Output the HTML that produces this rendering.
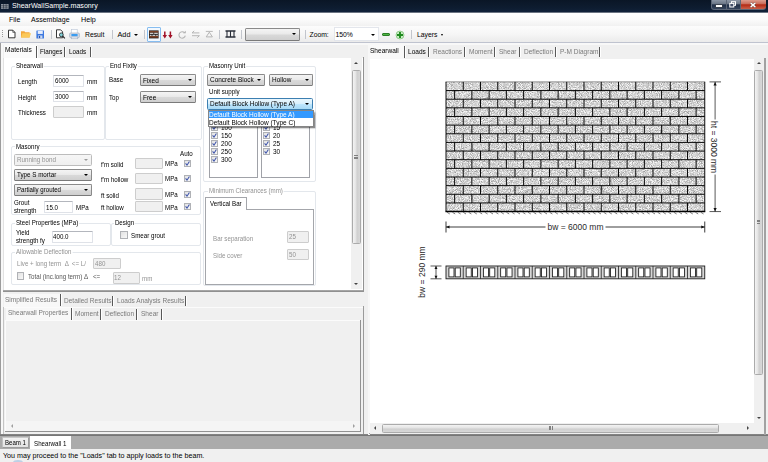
<!DOCTYPE html><html><head><meta charset="utf-8"><title>ShearWallSample.masonry</title><style>
html,body{margin:0;padding:0}
body{width:768px;height:462px;overflow:hidden;background:#f0f0f0;position:relative;font-family:"Liberation Sans",sans-serif;font-size:6.2px;color:#000;line-height:1}
.a{position:absolute}
.t{position:absolute;white-space:nowrap;line-height:8px;height:8px}
.g{color:#929292}
.gb{position:absolute;border:1px solid #e3e7ec;border-radius:2px;box-sizing:border-box}
.gl{position:absolute;background:#fff;padding:0 1px;white-space:nowrap;line-height:8px;height:8px}
.in{position:absolute;box-sizing:border-box;border:1px solid #dfe2e8;border-top-color:#b3b6bd;background:#fff;border-radius:1px}
.in.d{background:#f0f0f0;border-color:#cdcdcd}
.cb{position:absolute;box-sizing:border-box;border:1px solid #8a8a8a;border-bottom-color:#7a7a7a;border-radius:1.5px;background:linear-gradient(#f4f4f4,#e9e9e9 48%,#d9d9d9 52%,#cfcfcf)}
.cb.d{border-color:#bcbcbc;background:linear-gradient(#f6f6f6,#efefef)}
.cb.f{border-color:#3c7fb1;background:linear-gradient(#eaf6fd,#d9f0fc 48%,#bee6fd 52%,#a7d9f5)}
.ar{position:absolute;width:0;height:0;border-left:2px solid transparent;border-right:2px solid transparent;border-top:2.5px solid #000}
.ar.d{border-top-color:#9a9a9a}
.ck{position:absolute;box-sizing:border-box;width:7px;height:7px;border:1px solid #b0b2b6;background:linear-gradient(135deg,#e2e2e2,#f8f8f8)}
.sep{position:absolute;width:1px;background:#585858}
.tsep{position:absolute;width:1px;background:#c2c5cc}
</style></head><body>
<div class="a" style="left:0px;top:0px;width:768px;height:11.8px;background:linear-gradient(#0a1626,#0e1d31 70%,#11223a)"></div>
<div class="a" style="left:0px;top:11.8px;width:768px;height:0.8px;background:#6b7482"></div>
<svg class="a" style="left:.5px;top:3.6px" width="8" height="5" viewBox="0 0 8 5"><rect x="0" y=".2" width="7.6" height="4.5" fill="#aab0b8"/><path d="M0 1.7H7.6M0 3.2H7.6M2.5 .2V4.7M5.1 .2V4.7" stroke="#2c3644" stroke-width=".7"/></svg>
<div class="t " style="left:12px;top:2.4000000000000004px;color:#fff;font-size:7.1px">ShearWallSample.masonry</div>
<div class="a" style="left:711px;top:0;width:55px;height:9.5px;border:1px solid #5c6676;border-top:none;border-radius:0 0 3px 3px;box-sizing:border-box;background:linear-gradient(#8c96a5,#6a7585 46%,#1f2e46 52%,#34435b)"></div>
<div class="a" style="left:740.5px;top:0px;width:25px;height:9px;background:linear-gradient(#dd9d8e,#c96956 46%,#b32812 52%,#c9604a);border-radius:0 0 3px 0"></div>
<div class="a" style="left:725.5px;top:0px;width:1px;height:9px;background:#5c6676"></div>
<div class="a" style="left:740px;top:0px;width:1px;height:9px;background:#5c6676"></div>
<div class="a" style="left:715.5px;top:5px;width:6px;height:2px;background:#fff;box-shadow:0 0 0 .5px #444"></div>
<svg class="a" style="left:728px;top:1px" width="10" height="7" viewBox="0 0 10 7"><rect x="3.5" y=".7" width="4" height="3.6" fill="none" stroke="#fff" stroke-width="1"/><rect x="1.8" y="2.4" width="4" height="3.6" fill="#44506a" stroke="#fff" stroke-width="1"/></svg>
<svg class="a" style="left:749px;top:1.5px" width="8" height="6" viewBox="0 0 8 6"><path d="M1.6 .9 L6.4 5.1 M6.4 .9 L1.6 5.1" stroke="#5a2a22" stroke-width="2.2"/><path d="M1.6 .9 L6.4 5.1 M6.4 .9 L1.6 5.1" stroke="#fff" stroke-width="1.4"/></svg>
<div class="a" style="left:0px;top:12.5px;width:768px;height:13.5px;background:linear-gradient(#ffffff,#fbfbfb 50%,#f1f1f1)"></div>
<div class="t " style="left:9px;top:15.8px;font-size:7px">File</div>
<div class="t " style="left:31px;top:15.8px;font-size:7px">Assemblage</div>
<div class="t " style="left:81px;top:15.8px;font-size:7.2px">Help</div>
<div class="a" style="left:0px;top:26px;width:768px;height:16px;background:linear-gradient(#fcfcfc,#f6f6f6 50%,#ebebeb)"></div>
<div class="a" style="left:0px;top:42px;width:768px;height:1px;background:#bfc3cf"></div>
<div class="a" style="left:0px;top:43px;width:768px;height:2px;background:#f8f8f8"></div>
<div class="a" style="left:2.2px;top:29.5px;width:1px;height:1px;background:#9a9a9a"></div>
<div class="a" style="left:2.2px;top:31.8px;width:1px;height:1px;background:#9a9a9a"></div>
<div class="a" style="left:2.2px;top:34.1px;width:1px;height:1px;background:#9a9a9a"></div>
<div class="a" style="left:2.2px;top:36.4px;width:1px;height:1px;background:#9a9a9a"></div>
<svg class="a" style="left:7px;top:29px" width="10" height="10" viewBox="0 0 10 10"><path d="M1.5 1.2H5.8L8 3.4V8.8H1.5Z" fill="#fff" stroke="#222" stroke-width=".9"/><path d="M5.8 1.2V3.4H8" fill="none" stroke="#222" stroke-width=".6"/></svg>
<svg class="a" style="left:20px;top:29px" width="12" height="10" viewBox="0 0 12 10"><path d="M1 2.2H4.4L5.2 3.2H9.6V8.4H1Z" fill="#f2a73c"/><path d="M2.4 4.2H11L9.6 8.6H1Z" fill="#fbc95a"/></svg>
<svg class="a" style="left:35.8px;top:29.8px" width="8.5" height="9.4" viewBox="0 0 9 10"><rect x=".4" y=".4" width="8.2" height="8.6" rx=".6" fill="#3d79e0"/><rect x="1.8" y=".8" width="5.4" height="3.4" fill="#e6eefc"/><rect x="2.2" y="5.8" width="4.6" height="3.2" fill="#c9d6ee"/><rect x="3" y="6.4" width="1.4" height="2.2" fill="#2b55aa"/></svg>
<div class="a" style="left:50.5px;top:30px;width:1px;height:9px;background:#c2c5cc"></div>
<svg class="a" style="left:55px;top:29px" width="11" height="10" viewBox="0 0 11 10"><path d="M1.5 .8H5.6L7.6 2.8V8.8H1.5Z" fill="#fff" stroke="#222" stroke-width=".9"/><circle cx="6.3" cy="5.8" r="1.9" fill="#7fd0d8" stroke="#222" stroke-width=".8"/><path d="M7.7 7.2L9.8 9.4" stroke="#222" stroke-width="1.2"/></svg>
<svg class="a" style="left:69px;top:29px" width="11" height="11" viewBox="0 0 11 11"><rect x="2.6" y=".6" width="5.6" height="4" fill="#fff" stroke="#b8c4d6" stroke-width=".6"/><rect x=".6" y="4" width="9.8" height="4.6" rx="1" fill="#d5dbe6" stroke="#9aa6ba" stroke-width=".6"/><rect x="2.4" y="5" width="6.2" height="2.2" fill="#3b9cf0"/><rect x="2.2" y="8" width="6.6" height="1.8" fill="#eef1f6" stroke="#9aa6ba" stroke-width=".5"/></svg>
<div class="t " style="left:85px;top:30.700000000000003px;font-size:6.8px">Result</div>
<div class="a" style="left:111.5px;top:30px;width:1px;height:9px;background:#c2c5cc"></div>
<div class="t " style="left:117.5px;top:30.700000000000003px;font-size:7.3px">Add</div>
<div class="ar" style="left:133.8px;top:33.8px;border-left-width:2px;border-right-width:2px;border-top-width:2.3px"></div>
<div class="a" style="left:143.5px;top:30px;width:1px;height:9px;background:#c2c5cc"></div>
<div class="a" style="left:147px;top:27px;width:14px;height:14.5px;border:1px solid #86bdf0;background:#f2f8fe;box-sizing:border-box;border-radius:1px"></div>
<svg class="a" style="left:149px;top:29.5px" width="10" height="9" viewBox="0 0 10 9"><rect x="0" y=".4" width="9.6" height="8" fill="#1f1d1c"/><path d="M.3 1.9H9.3M.3 6.9H9.3" stroke="#d9652f" stroke-width=".8"/><path d="M.8 3.3H4.4M5.2 3.3H8.8M.8 5.4H2.6M3.4 5.4H6.4M7.2 5.4H8.8" stroke="#c9c9c9" stroke-width="1.2"/></svg>
<svg class="a" style="left:162px;top:30.5px" width="12" height="8" viewBox="0 0 12 8"><path d="M2.8 .6V5M8.4 .6V5" stroke="#a01228" stroke-width="1.5"/><path d="M.6 4H5L2.8 7.4ZM6.2 4H10.6L8.4 7.4Z" fill="#a01228"/></svg>
<svg class="a" style="left:176.5px;top:29.5px" width="11" height="10" viewBox="0 0 11 10"><path d="M7.6 2.9A3.2 3.2 0 1 0 8.3 5.6" fill="none" stroke="#b2b2b2" stroke-width="1.05"/><path d="M5.9 3.3H8.8V.7Z" fill="#b2b2b2"/></svg>
<svg class="a" style="left:190.5px;top:30px" width="10" height="9" viewBox="0 0 10 9"><path d="M1 2.9H8.4M3.2 .9L1 2.9M1 5.7H8.4M6.2 7.7L8.4 5.7" fill="none" stroke="#b2b2b2" stroke-width=".95"/></svg>
<svg class="a" style="left:204.5px;top:30px" width="9" height="9" viewBox="0 0 9 9"><path d="M.8 1.4H7.8M4.3 2.2L1.2 6.9H7.4Z" fill="none" stroke="#b2b2b2" stroke-width=".95"/></svg>
<div class="a" style="left:219px;top:30px;width:1px;height:9px;background:#c2c5cc"></div>
<svg class="a" style="left:224.5px;top:30px" width="11" height="8" viewBox="0 0 11 8"><path d="M.5 1H10.5M.5 7H10.5" stroke="#2a2f3a" stroke-width="1.3"/><path d="M2 1V7M5.5 1V7M9 1V7" stroke="#2a2f3a" stroke-width="1.1"/></svg>
<div class="a" style="left:240.5px;top:30px;width:1px;height:9px;background:#c2c5cc"></div>
<div class="cb " style="left:245px;top:27.5px;width:54.5px;height:13.5px"></div>
<div class="ar " style="left:291.5px;top:33.25px"></div>
<div class="a" style="left:304.5px;top:30px;width:1px;height:9px;background:#c2c5cc"></div>
<div class="t " style="left:309.5px;top:30.700000000000003px;font-size:6.8px">Zoom:</div>
<div class="a" style="left:333.5px;top:27px;width:45px;height:13.5px;background:#fff;border:1px solid #e3e6ec;box-sizing:border-box"></div>
<div class="t " style="left:335.5px;top:30.700000000000003px;font-size:6.8px">150%</div>
<div class="ar" style="left:371px;top:33.5px"></div>
<div class="a" style="left:382px;top:32.5px;width:8px;height:3.6px;background:linear-gradient(#6fcf61,#2e9a28);border:0.6px solid #2a7d25;box-sizing:border-box;border-radius:1px"></div>
<svg class="a" style="left:395px;top:29.5px" width="10" height="10" viewBox="0 0 10 10"><circle cx="5" cy="5" r="4" fill="#c9ecc3" stroke="#6ab564" stroke-width=".6"/><path d="M5 2V8M2 5H8" stroke="#1f8a1f" stroke-width="1.9"/></svg>
<div class="a" style="left:410.5px;top:30px;width:1px;height:9px;background:#c2c5cc"></div>
<div class="t " style="left:417px;top:30.700000000000003px;font-size:6.8px">Layers</div>
<div class="ar" style="left:440.6px;top:34px;border-left-width:1.8px;border-right-width:1.8px;border-top-width:2.1px"></div>
<div class="a" style="left:0px;top:42.5px;width:0.9px;height:392px;background:#9c9c9c"></div>
<div class="a" style="left:0.9px;top:42.5px;width:1.8px;height:392px;background:#f8f8f8"></div>
<div class="a" style="left:3.2px;top:58px;width:1px;height:232px;background:#e2e2e2"></div>
<div class="a" style="left:4px;top:58.3px;width:359px;height:232px;background:#fff"></div>
<div class="a" style="left:2.7px;top:289.9px;width:361.3px;height:1.7px;background:linear-gradient(#b0b0b0,#858585)"></div>
<div class="a" style="left:362.5px;top:57px;width:1.5px;height:234.5px;background:#929292"></div>
<div class="a" style="left:3.5px;top:44.5px;width:33px;height:13.5px;background:#fbfbfb"></div>
<div class="t " style="left:5px;top:46.3px;;font-size:7.33px;transform:scaleX(.9);transform-origin:0 50%">Materials</div>
<div class="a" style="left:36.3px;top:45.5px;width:1.1px;height:12px;background:#585858"></div>
<div class="a" style="left:37.4px;top:45.5px;width:0.7px;height:12px;background:#fff"></div>
<div class="t " style="left:40px;top:47.5px;;font-size:6.99px;transform:scaleX(.9);transform-origin:0 50%">Flanges</div>
<div class="a" style="left:64.3px;top:46.5px;width:1.1px;height:10.5px;background:#585858"></div>
<div class="a" style="left:65.4px;top:46.5px;width:0.7px;height:10.5px;background:#fff"></div>
<div class="t " style="left:69px;top:47.5px;;font-size:6.99px;transform:scaleX(.9);transform-origin:0 50%">Loads</div>
<div class="a" style="left:89.8px;top:46.5px;width:1.1px;height:10.5px;background:#585858"></div>
<div class="a" style="left:90.9px;top:46.5px;width:0.7px;height:10.5px;background:#fff"></div>
<div class="gb" style="left:11px;top:65.7px;width:94px;height:74.5px"></div>
<div class="gl " style="left:15px;top:62.2px;font-size:6.85px;transform:scaleX(.9);transform-origin:0 50%">Shearwall</div>
<div class="t " style="left:18px;top:77.5px;;font-size:6.88px;transform:scaleX(.9);transform-origin:0 50%">Length</div>
<div class="in " style="left:53px;top:75px;width:30.5px;height:11.5px"></div>
<div class="t " style="left:54.8px;top:77.25px;;font-size:6.88px;transform:scaleX(.9);transform-origin:0 50%">6000</div>
<div class="t " style="left:87px;top:77.5px;;font-size:6.88px;transform:scaleX(.9);transform-origin:0 50%">mm</div>
<div class="t " style="left:18px;top:93.5px;;font-size:6.88px;transform:scaleX(.9);transform-origin:0 50%">Height</div>
<div class="in " style="left:53px;top:90.5px;width:30.5px;height:11.5px"></div>
<div class="t " style="left:54.8px;top:92.75px;;font-size:6.88px;transform:scaleX(.9);transform-origin:0 50%">3000</div>
<div class="t " style="left:87px;top:93.5px;;font-size:6.88px;transform:scaleX(.9);transform-origin:0 50%">mm</div>
<div class="t " style="left:18px;top:108.5px;;font-size:6.88px;transform:scaleX(.9);transform-origin:0 50%">Thickness</div>
<div class="in d" style="left:53px;top:106px;width:30.5px;height:11.5px"></div>
<div class="t " style="left:87px;top:108.5px;;font-size:6.88px;transform:scaleX(.9);transform-origin:0 50%">mm</div>
<div class="gb" style="left:104.5px;top:65.7px;width:97px;height:74.5px"></div>
<div class="gl " style="left:109px;top:62.2px;font-size:6.85px;transform:scaleX(.9);transform-origin:0 50%">End Fixity</div>
<div class="t " style="left:109px;top:75.8px;;font-size:6.88px;transform:scaleX(.9);transform-origin:0 50%">Base</div>
<div class="cb " style="left:140px;top:74px;width:55.5px;height:12px"></div>
<div class="t " style="left:142.5px;top:76.5px;;font-size:7.16px;transform:scaleX(.9);transform-origin:0 50%">Fixed</div>
<div class="ar " style="left:187.5px;top:79.0px"></div>
<div class="t " style="left:109px;top:93.5px;;font-size:6.88px;transform:scaleX(.9);transform-origin:0 50%">Top</div>
<div class="cb " style="left:140px;top:91px;width:55.5px;height:12px"></div>
<div class="t " style="left:142.5px;top:93.5px;;font-size:7.16px;transform:scaleX(.9);transform-origin:0 50%">Free</div>
<div class="ar " style="left:187.5px;top:96.0px"></div>
<div class="gb" style="left:203px;top:65.7px;width:112.5px;height:116px"></div>
<div class="gl " style="left:208px;top:62.2px;font-size:6.85px;transform:scaleX(.9);transform-origin:0 50%">Masonry Unit</div>
<div class="cb " style="left:207px;top:73.5px;width:58px;height:12px"></div>
<div class="t " style="left:209.5px;top:76.0px;;font-size:7.16px;transform:scaleX(.9);transform-origin:0 50%">Concrete Block</div>
<div class="ar " style="left:257px;top:78.5px"></div>
<div class="cb " style="left:269px;top:73.5px;width:44px;height:12px"></div>
<div class="t " style="left:271.5px;top:76.0px;;font-size:7.16px;transform:scaleX(.9);transform-origin:0 50%">Hollow</div>
<div class="ar " style="left:305px;top:78.5px"></div>
<div class="t " style="left:209px;top:87.7px;;font-size:6.88px;transform:scaleX(.9);transform-origin:0 50%">Unit supply</div>
<div class="cb f" style="left:207px;top:97.5px;width:106px;height:12px"></div>
<div class="t " style="left:209.5px;top:100.0px;;font-size:7.16px;transform:scaleX(.9);transform-origin:0 50%">Default Block Hollow (Type A)</div>
<div class="ar " style="left:305px;top:102.5px"></div>
<div class="a" style="left:209px;top:120px;width:48.5px;height:57.5px;border:1px solid #a0a2a8;background:#fff;box-sizing:border-box"></div>
<div class="a" style="left:261px;top:120px;width:48.5px;height:57.5px;border:1px solid #a0a2a8;background:#fff;box-sizing:border-box"></div>
<div class="ck" style="left:211px;top:123.5px;width:7px;height:7px"></div>
<svg class="a" style="left:211px;top:123.5px" width="7" height="7" viewBox="0 0 7 7"><path d="M1.6 3.4 L3 5.2 L5.4 1.5" fill="none" stroke="#3a50a8" stroke-width="1.05"/></svg>
<div class="t " style="left:221px;top:123.5px;;font-size:7.22px;transform:scaleX(.9);transform-origin:0 50%">100</div>
<div class="ck" style="left:263px;top:123.5px;width:7px;height:7px"></div>
<svg class="a" style="left:263px;top:123.5px" width="7" height="7" viewBox="0 0 7 7"><path d="M1.6 3.4 L3 5.2 L5.4 1.5" fill="none" stroke="#3a50a8" stroke-width="1.05"/></svg>
<div class="t " style="left:273px;top:123.5px;;font-size:7.22px;transform:scaleX(.9);transform-origin:0 50%">15</div>
<div class="ck" style="left:211px;top:131.6px;width:7px;height:7px"></div>
<svg class="a" style="left:211px;top:131.6px" width="7" height="7" viewBox="0 0 7 7"><path d="M1.6 3.4 L3 5.2 L5.4 1.5" fill="none" stroke="#3a50a8" stroke-width="1.05"/></svg>
<div class="t " style="left:221px;top:131.6px;;font-size:7.22px;transform:scaleX(.9);transform-origin:0 50%">150</div>
<div class="ck" style="left:263px;top:131.6px;width:7px;height:7px"></div>
<svg class="a" style="left:263px;top:131.6px" width="7" height="7" viewBox="0 0 7 7"><path d="M1.6 3.4 L3 5.2 L5.4 1.5" fill="none" stroke="#3a50a8" stroke-width="1.05"/></svg>
<div class="t " style="left:273px;top:131.6px;;font-size:7.22px;transform:scaleX(.9);transform-origin:0 50%">20</div>
<div class="ck" style="left:211px;top:139.7px;width:7px;height:7px"></div>
<svg class="a" style="left:211px;top:139.7px" width="7" height="7" viewBox="0 0 7 7"><path d="M1.6 3.4 L3 5.2 L5.4 1.5" fill="none" stroke="#3a50a8" stroke-width="1.05"/></svg>
<div class="t " style="left:221px;top:139.7px;;font-size:7.22px;transform:scaleX(.9);transform-origin:0 50%">200</div>
<div class="ck" style="left:263px;top:139.7px;width:7px;height:7px"></div>
<svg class="a" style="left:263px;top:139.7px" width="7" height="7" viewBox="0 0 7 7"><path d="M1.6 3.4 L3 5.2 L5.4 1.5" fill="none" stroke="#3a50a8" stroke-width="1.05"/></svg>
<div class="t " style="left:273px;top:139.7px;;font-size:7.22px;transform:scaleX(.9);transform-origin:0 50%">25</div>
<div class="ck" style="left:211px;top:147.8px;width:7px;height:7px"></div>
<svg class="a" style="left:211px;top:147.8px" width="7" height="7" viewBox="0 0 7 7"><path d="M1.6 3.4 L3 5.2 L5.4 1.5" fill="none" stroke="#3a50a8" stroke-width="1.05"/></svg>
<div class="t " style="left:221px;top:147.8px;;font-size:7.22px;transform:scaleX(.9);transform-origin:0 50%">250</div>
<div class="ck" style="left:263px;top:147.8px;width:7px;height:7px"></div>
<svg class="a" style="left:263px;top:147.8px" width="7" height="7" viewBox="0 0 7 7"><path d="M1.6 3.4 L3 5.2 L5.4 1.5" fill="none" stroke="#3a50a8" stroke-width="1.05"/></svg>
<div class="t " style="left:273px;top:147.8px;;font-size:7.22px;transform:scaleX(.9);transform-origin:0 50%">30</div>
<div class="ck" style="left:211px;top:155.9px;width:7px;height:7px"></div>
<svg class="a" style="left:211px;top:155.9px" width="7" height="7" viewBox="0 0 7 7"><path d="M1.6 3.4 L3 5.2 L5.4 1.5" fill="none" stroke="#3a50a8" stroke-width="1.05"/></svg>
<div class="t " style="left:221px;top:155.9px;;font-size:7.22px;transform:scaleX(.9);transform-origin:0 50%">300</div>
<div class="a" style="left:207.5px;top:109.7px;width:106px;height:17px;background:#fff;border:.8px solid #858585;box-sizing:border-box;box-shadow:1.5px 1.5px 1.5px rgba(0,0,0,.45)"></div>
<div class="a" style="left:208.5px;top:110.5px;width:104px;height:7.7px;background:#3399ff"></div>
<div class="t " style="left:209px;top:110.7px;color:#fff;;font-size:7.22px;transform:scaleX(.9);transform-origin:0 50%">Default Block Hollow (Type A)</div>
<div class="t " style="left:209px;top:118.6px;;font-size:7.22px;transform:scaleX(.9);transform-origin:0 50%">Default Block Hollow (Type C)</div>
<div class="gb" style="left:11px;top:146.2px;width:189.5px;height:69px"></div>
<div class="gl " style="left:15px;top:142.7px;font-size:6.85px;transform:scaleX(.9);transform-origin:0 50%">Masonry</div>
<div class="cb d" style="left:14px;top:153.5px;width:77.5px;height:12px"></div>
<div class="t g" style="left:16.5px;top:156.0px;;font-size:6.94px;transform:scaleX(.9);transform-origin:0 50%">Running bond</div>
<div class="ar d" style="left:83.5px;top:158.5px"></div>
<div class="cb " style="left:14px;top:168.5px;width:77.5px;height:12px"></div>
<div class="t " style="left:16.5px;top:171.0px;;font-size:6.94px;transform:scaleX(.9);transform-origin:0 50%">Type S mortar</div>
<div class="ar " style="left:83.5px;top:173.5px"></div>
<div class="cb " style="left:14px;top:183.5px;width:77.5px;height:12px"></div>
<div class="t " style="left:16.5px;top:186.0px;;font-size:6.77px;transform:scaleX(.9);transform-origin:0 50%">Partially grouted</div>
<div class="ar " style="left:83.5px;top:188.5px"></div>
<div class="t " style="left:14px;top:198.9px;;font-size:6.88px;transform:scaleX(.9);transform-origin:0 50%">Grout</div>
<div class="t " style="left:14px;top:206.8px;;font-size:6.88px;transform:scaleX(.9);transform-origin:0 50%">strength</div>
<div class="in " style="left:44px;top:201px;width:28.5px;height:12px"></div>
<div class="t " style="left:45.8px;top:203.5px;;font-size:6.88px;transform:scaleX(.9);transform-origin:0 50%">15.0</div>
<div class="t " style="left:76px;top:203.5px;;font-size:6.88px;transform:scaleX(.9);transform-origin:0 50%">MPa</div>
<div class="t " style="left:180px;top:149.5px;;font-size:6.88px;transform:scaleX(.9);transform-origin:0 50%">Auto</div>
<div class="t " style="left:101px;top:160.5px;;font-size:6.88px;transform:scaleX(.9);transform-origin:0 50%">f'm solid</div>
<div class="in d" style="left:135px;top:157.5px;width:27.5px;height:11.5px"></div>
<div class="t " style="left:165px;top:159.5px;;font-size:6.88px;transform:scaleX(.9);transform-origin:0 50%">MPa</div>
<div class="ck" style="left:184px;top:160.0px;width:7px;height:7px"></div>
<svg class="a" style="left:184px;top:160.0px" width="7" height="7" viewBox="0 0 7 7"><path d="M1.6 3.4 L3 5.2 L5.4 1.5" fill="none" stroke="#3a50a8" stroke-width="1.05"/></svg>
<div class="t " style="left:101px;top:176.0px;;font-size:6.88px;transform:scaleX(.9);transform-origin:0 50%">f'm hollow</div>
<div class="in d" style="left:135px;top:172.5px;width:27.5px;height:11.5px"></div>
<div class="t " style="left:165px;top:175.0px;;font-size:6.88px;transform:scaleX(.9);transform-origin:0 50%">MPa</div>
<div class="ck" style="left:184px;top:175.0px;width:7px;height:7px"></div>
<svg class="a" style="left:184px;top:175.0px" width="7" height="7" viewBox="0 0 7 7"><path d="M1.6 3.4 L3 5.2 L5.4 1.5" fill="none" stroke="#3a50a8" stroke-width="1.05"/></svg>
<div class="t " style="left:101px;top:191.5px;;font-size:6.88px;transform:scaleX(.9);transform-origin:0 50%">ft solid</div>
<div class="in d" style="left:135px;top:188px;width:27.5px;height:11.5px"></div>
<div class="t " style="left:165px;top:190.5px;;font-size:6.88px;transform:scaleX(.9);transform-origin:0 50%">MPa</div>
<div class="ck" style="left:184px;top:190.5px;width:7px;height:7px"></div>
<svg class="a" style="left:184px;top:190.5px" width="7" height="7" viewBox="0 0 7 7"><path d="M1.6 3.4 L3 5.2 L5.4 1.5" fill="none" stroke="#3a50a8" stroke-width="1.05"/></svg>
<div class="t " style="left:101px;top:203.5px;;font-size:6.88px;transform:scaleX(.9);transform-origin:0 50%">ft hollow</div>
<div class="in d" style="left:135px;top:200.5px;width:27.5px;height:11.5px"></div>
<div class="t " style="left:165px;top:203.5px;;font-size:6.88px;transform:scaleX(.9);transform-origin:0 50%">MPa</div>
<div class="ck" style="left:184px;top:203.0px;width:7px;height:7px"></div>
<svg class="a" style="left:184px;top:203.0px" width="7" height="7" viewBox="0 0 7 7"><path d="M1.6 3.4 L3 5.2 L5.4 1.5" fill="none" stroke="#3a50a8" stroke-width="1.05"/></svg>
<div class="gb" style="left:11px;top:222.7px;width:99.5px;height:23.5px"></div>
<div class="gl " style="left:15px;top:219.2px;font-size:6.85px;transform:scaleX(.9);transform-origin:0 50%">Steel Properties (MPa)</div>
<div class="t " style="left:16px;top:228.5px;;font-size:6.88px;transform:scaleX(.9);transform-origin:0 50%">Yield</div>
<div class="t " style="left:16px;top:236.5px;;font-size:6.88px;transform:scaleX(.9);transform-origin:0 50%">strength fy</div>
<div class="in " style="left:51.5px;top:230.5px;width:41.5px;height:12px"></div>
<div class="t " style="left:53.3px;top:233.0px;;font-size:6.88px;transform:scaleX(.9);transform-origin:0 50%">400.0</div>
<div class="gb" style="left:110.5px;top:222.7px;width:90px;height:23.5px"></div>
<div class="gl " style="left:114px;top:219.2px;font-size:6.85px;transform:scaleX(.9);transform-origin:0 50%">Design</div>
<div class="ck" style="left:120px;top:231px;width:7.5px;height:7.5px"></div>
<div class="t " style="left:131px;top:232.0px;;font-size:6.88px;transform:scaleX(.9);transform-origin:0 50%">Smear grout</div>
<div class="gb" style="left:11px;top:251.7px;width:189.5px;height:33.5px"></div>
<div class="gl g" style="left:15px;top:248.2px;font-size:6.85px;transform:scaleX(.9);transform-origin:0 50%">Allowable Deflection</div>
<div class="t g" style="left:17px;top:259.5px;;font-size:6.88px;transform:scaleX(.9);transform-origin:0 50%">Live + long term &nbsp;Δ &nbsp;&lt;= L/</div>
<div class="in d" style="left:93px;top:257.5px;width:27.5px;height:11.5px"></div>
<div class="t g" style="left:94.8px;top:259.75px;;font-size:6.88px;transform:scaleX(.9);transform-origin:0 50%">480</div>
<div class="ck" style="left:16.5px;top:272px;width:7.5px;height:7.5px"></div>
<div class="t " style="left:28px;top:273.0px;color:#555;font-size:6.88px;transform:scaleX(.9);transform-origin:0 50%">Total (inc.long term) Δ &nbsp;&nbsp;&lt;=</div>
<div class="in d" style="left:112.5px;top:272px;width:27.5px;height:11.5px"></div>
<div class="t g" style="left:114.3px;top:274.25px;;font-size:6.88px;transform:scaleX(.9);transform-origin:0 50%">12</div>
<div class="t g" style="left:142px;top:274.5px;;font-size:6.88px;transform:scaleX(.9);transform-origin:0 50%">mm</div>
<div class="gb" style="left:203px;top:190.7px;width:112.5px;height:95.5px"></div>
<div class="gl g" style="left:208px;top:187.2px;font-size:6.85px;transform:scaleX(.9);transform-origin:0 50%">Minimum Clearances (mm)</div>
<div class="a" style="left:205px;top:209px;width:108.5px;height:75.5px;border:1px solid #a4a6ab;background:#fff;box-sizing:border-box"></div>
<div class="a" style="left:205px;top:197px;width:41.5px;height:13px;border:1px solid #a4a6ab;border-bottom:none;background:#fff;box-sizing:border-box"></div>
<div class="t " style="left:210px;top:199.5px;;font-size:6.88px;transform:scaleX(.9);transform-origin:0 50%">Vertical Bar</div>
<div class="t g" style="left:213px;top:234.5px;;font-size:6.88px;transform:scaleX(.9);transform-origin:0 50%">Bar separation</div>
<div class="in d" style="left:287px;top:231px;width:22px;height:11.5px"></div>
<div class="t g" style="left:288.8px;top:233.25px;;font-size:6.88px;transform:scaleX(.9);transform-origin:0 50%">25</div>
<div class="t g" style="left:213px;top:251.5px;;font-size:6.88px;transform:scaleX(.9);transform-origin:0 50%">Side cover</div>
<div class="in d" style="left:287px;top:248.5px;width:22px;height:11.5px"></div>
<div class="t g" style="left:288.8px;top:250.75px;;font-size:6.88px;transform:scaleX(.9);transform-origin:0 50%">50</div>
<div class="a" style="left:351.2px;top:58.3px;width:11.3px;height:230.7px;background:#f0f0f0"></div>
<div class="a" style="left:351.5px;top:69.5px;width:9px;height:174px;border:1px solid #ababab;border-radius:1.5px;box-sizing:border-box;background:linear-gradient(90deg,#f3f3f3,#e2e2e2 45%,#cfcfcf 55%,#d8d8d8)"></div>
<div class="a" style="left:354.3px;top:155.0px;width:3.5px;height:0.7px;background:#808080"></div>
<div class="a" style="left:354.3px;top:156.5px;width:3.5px;height:0.7px;background:#808080"></div>
<div class="a" style="left:354.3px;top:158.0px;width:3.5px;height:0.7px;background:#808080"></div>
<div class="ar" style="left:354px;top:62px;border-top:none;border-bottom:2.5px solid #444"></div>
<div class="ar" style="left:354px;top:283px;border-top-color:#444"></div>
<div class="a" style="left:4px;top:293.5px;width:56px;height:13.3px;background:#f8f8f8"></div>
<div class="a" style="left:6px;top:307.8px;width:65px;height:12.4px;background:#f8f8f8"></div>
<div class="t " style="left:5px;top:295.5px;color:#7a7a7a;font-size:7.27px;transform:scaleX(.9);transform-origin:0 50%">Simplified Results</div>
<div class="a" style="left:60px;top:294px;width:1.1px;height:12px;background:#585858"></div>
<div class="a" style="left:61.1px;top:294px;width:0.7px;height:12px;background:#fff"></div>
<div class="t " style="left:64px;top:296.5px;color:#7a7a7a;font-size:7.27px;transform:scaleX(.9);transform-origin:0 50%">Detailed Results</div>
<div class="a" style="left:112px;top:295.5px;width:1.1px;height:10.5px;background:#585858"></div>
<div class="a" style="left:113.1px;top:295.5px;width:0.7px;height:10.5px;background:#fff"></div>
<div class="t " style="left:117px;top:296.5px;color:#7a7a7a;font-size:7.27px;transform:scaleX(.9);transform-origin:0 50%">Loads Analysis Results</div>
<div class="a" style="left:184.5px;top:295.5px;width:1.1px;height:10.5px;background:#585858"></div>
<div class="a" style="left:185.6px;top:295.5px;width:0.7px;height:10.5px;background:#fff"></div>
<div class="a" style="left:3.2px;top:307px;width:1px;height:127px;background:#c4c4c4"></div>
<div class="a" style="left:3.5px;top:306.5px;width:360px;height:0.7px;background:#fbfbfb"></div>
<div class="a" style="left:362.7px;top:306px;width:1.4px;height:128.5px;background:#9a9a9a"></div>
<div class="t " style="left:8px;top:308.5px;color:#7a7a7a;font-size:7.27px;transform:scaleX(.9);transform-origin:0 50%">Shearwall Properties</div>
<div class="a" style="left:71px;top:308px;width:1.1px;height:11.5px;background:#585858"></div>
<div class="a" style="left:72.1px;top:308px;width:0.7px;height:11.5px;background:#fff"></div>
<div class="t " style="left:75px;top:309.5px;color:#7a7a7a;font-size:7.27px;transform:scaleX(.9);transform-origin:0 50%">Moment</div>
<div class="a" style="left:99.7px;top:309px;width:1.1px;height:10.5px;background:#585858"></div>
<div class="a" style="left:100.8px;top:309px;width:0.7px;height:10.5px;background:#fff"></div>
<div class="t " style="left:104.5px;top:309.5px;color:#7a7a7a;font-size:7.27px;transform:scaleX(.9);transform-origin:0 50%">Deflection</div>
<div class="a" style="left:136.3px;top:309px;width:1.1px;height:10.5px;background:#585858"></div>
<div class="a" style="left:137.4px;top:309px;width:0.7px;height:10.5px;background:#fff"></div>
<div class="t " style="left:140.5px;top:309.5px;color:#7a7a7a;font-size:7.27px;transform:scaleX(.9);transform-origin:0 50%">Shear</div>
<div class="a" style="left:161.3px;top:309px;width:1.1px;height:10.5px;background:#585858"></div>
<div class="a" style="left:162.4px;top:309px;width:0.7px;height:10.5px;background:#fff"></div>
<div class="a" style="left:5px;top:320px;width:355px;height:0.8px;background:#fbfbfb"></div>
<div class="a" style="left:5px;top:320px;width:0.8px;height:111px;background:#fbfbfb"></div>
<div class="a" style="left:360.2px;top:320px;width:1.1px;height:112px;background:#929292"></div>
<div class="a" style="left:5px;top:431.2px;width:356.2px;height:1.1px;background:#929292"></div>
<div class="a" style="left:6px;top:421px;width:353.5px;height:9.5px;background:#f5f5f5"></div>
<div class="a" style="left:11px;top:423.5px;width:0;height:0;border-top:2px solid transparent;border-bottom:2px solid transparent;border-right:2.5px solid #a0a0a0"></div>
<div class="a" style="left:352.5px;top:423.5px;width:0;height:0;border-top:2px solid transparent;border-bottom:2px solid transparent;border-left:2.5px solid #a0a0a0"></div>
<div class="a" style="left:0px;top:434px;width:768px;height:1.6px;background:linear-gradient(#8a8a8a,#707070)"></div>
<div class="a" style="left:0px;top:435.7px;width:768px;height:13px;background:#ababab"></div>
<div class="a" style="left:1.5px;top:436.7px;width:27.7px;height:11.5px;background:linear-gradient(#f2f2f2,#e2e2e2);border:1px solid #9c9c9c;border-top-color:#c8c8c8;border-left-color:#c0c0c0;box-sizing:border-box;border-radius:1px"></div>
<div class="t " style="left:4.7px;top:438.5px;;font-size:6.77px;transform:scaleX(.9);transform-origin:0 50%">Beam 1</div>
<div class="a" style="left:29.7px;top:435.8px;width:41.3px;height:13px;background:#fff"></div>
<div class="t " style="left:33.8px;top:439.5px;;font-size:6.88px;transform:scaleX(.9);transform-origin:0 50%">Shearwall 1</div>
<div class="a" style="left:0px;top:448.7px;width:768px;height:13.3px;background:#f0f0f0"></div>
<div class="a" style="left:12.5px;top:459.6px;width:10px;height:5px;border-radius:50%;background:#bcd0e6"></div>
<div class="t " style="left:3px;top:452px;font-size:7.15px">You may proceed to the "Loads" tab to apply loads to the beam.</div>
<div class="a" style="left:369.5px;top:44.5px;width:34.5px;height:14px;background:#f9f9f9"></div>
<div class="t " style="left:370px;top:46.5px;;font-size:7.27px;transform:scaleX(.9);transform-origin:0 50%">Shearwall</div>
<div class="a" style="left:404.2px;top:45.5px;width:1.1px;height:12px;background:#585858"></div>
<div class="a" style="left:405.3px;top:45.5px;width:0.7px;height:12px;background:#fff"></div>
<div class="t " style="left:408px;top:47.5px;;font-size:7.27px;transform:scaleX(.9);transform-origin:0 50%">Loads</div>
<div class="a" style="left:428.3px;top:46.5px;width:1.1px;height:10.5px;background:#585858"></div>
<div class="a" style="left:429.40000000000003px;top:46.5px;width:0.7px;height:10.5px;background:#fff"></div>
<div class="t " style="left:433px;top:47.5px;color:#7a7a7a;font-size:7.27px;transform:scaleX(.9);transform-origin:0 50%">Reactions</div>
<div class="a" style="left:464.3px;top:46.5px;width:1.1px;height:10.5px;background:#585858"></div>
<div class="a" style="left:465.40000000000003px;top:46.5px;width:0.7px;height:10.5px;background:#fff"></div>
<div class="t " style="left:469px;top:47.5px;color:#7a7a7a;font-size:7.27px;transform:scaleX(.9);transform-origin:0 50%">Moment</div>
<div class="a" style="left:494px;top:46.5px;width:1.1px;height:10.5px;background:#585858"></div>
<div class="a" style="left:495.1px;top:46.5px;width:0.7px;height:10.5px;background:#fff"></div>
<div class="t " style="left:499px;top:47.5px;color:#7a7a7a;font-size:7.27px;transform:scaleX(.9);transform-origin:0 50%">Shear</div>
<div class="a" style="left:519.3px;top:46.5px;width:1.1px;height:10.5px;background:#585858"></div>
<div class="a" style="left:520.4px;top:46.5px;width:0.7px;height:10.5px;background:#fff"></div>
<div class="t " style="left:524px;top:47.5px;color:#7a7a7a;font-size:7.27px;transform:scaleX(.9);transform-origin:0 50%">Deflection</div>
<div class="a" style="left:555.3px;top:46.5px;width:1.1px;height:10.5px;background:#585858"></div>
<div class="a" style="left:556.4px;top:46.5px;width:0.7px;height:10.5px;background:#fff"></div>
<div class="t " style="left:560px;top:47.5px;color:#7a7a7a;font-size:7.27px;transform:scaleX(.9);transform-origin:0 50%">P-M Diagram</div>
<div class="a" style="left:598.5px;top:46.5px;width:1.1px;height:10.5px;background:#585858"></div>
<div class="a" style="left:599.6px;top:46.5px;width:0.7px;height:10.5px;background:#fff"></div>
<div class="a" style="left:369.5px;top:58.5px;width:394.5px;height:375px;background:#fff"></div>
<div class="a" style="left:368px;top:44.5px;width:1.5px;height:390px;background:#f7f7f7"></div>
<div class="a" style="left:764px;top:58px;width:1.5px;height:377px;background:#a2a2a2"></div>
<div class="a" style="left:369px;top:433px;width:396.5px;height:1.2px;background:#a8a8a8"></div>
<div class="a" style="left:753.5px;top:58.5px;width:10.5px;height:364.5px;background:#f0f0f0"></div>
<div class="a" style="left:753.8px;top:69.5px;width:9px;height:305px;border:1px solid #ababab;border-radius:1.5px;box-sizing:border-box;background:linear-gradient(90deg,#f3f3f3,#e2e2e2 45%,#cfcfcf 55%,#d8d8d8)"></div>
<div class="a" style="left:756.5px;top:219.5px;width:3.5px;height:0.7px;background:#808080"></div>
<div class="a" style="left:756.5px;top:221.0px;width:3.5px;height:0.7px;background:#808080"></div>
<div class="a" style="left:756.5px;top:222.5px;width:3.5px;height:0.7px;background:#808080"></div>
<div class="ar" style="left:756.5px;top:62px;border-top:none;border-bottom:2.5px solid #444"></div>
<div class="ar" style="left:756.5px;top:417px;border-top-color:#444"></div>
<div class="a" style="left:369.5px;top:423px;width:394.5px;height:10.5px;background:#f0f0f0"></div>
<div class="a" style="left:381.5px;top:423.5px;width:337.5px;height:9px;border:1px solid #ababab;border-radius:1.5px;box-sizing:border-box;background:linear-gradient(#f3f3f3,#e2e2e2 45%,#cfcfcf 55%,#d8d8d8)"></div>
<div class="a" style="left:548.5px;top:426.2px;width:0.7px;height:3.5px;background:#808080"></div>
<div class="a" style="left:550.0px;top:426.2px;width:0.7px;height:3.5px;background:#808080"></div>
<div class="a" style="left:551.5px;top:426.2px;width:0.7px;height:3.5px;background:#808080"></div>
<div class="a" style="left:373.5px;top:426px;width:0;height:0;border-top:2px solid transparent;border-bottom:2px solid transparent;border-right:2.5px solid #444"></div>
<div class="a" style="left:747px;top:426px;width:0;height:0;border-top:2px solid transparent;border-bottom:2px solid transparent;border-left:2.5px solid #444"></div>
<svg class="a" style="left:369.5px;top:58.5px" width="384" height="364.5" viewBox="369.5 58.5 384 364.5" font-family="Liberation Sans, sans-serif" font-size="8.5"><defs><filter id="sp" x="0" y="0" width="100%" height="100%"><feTurbulence type="fractalNoise" baseFrequency="1.1" numOctaves="2" seed="7" result="n"/><feColorMatrix in="n" type="matrix" values="0 0 0 0 0  0 0 0 0 0  0 0 0 0 0  1.3 1.3 1.3 0 -1.55"/><feComposite in2="SourceGraphic" operator="in"/></filter></defs><rect x="445.5" y="81.4" width="258.75" height="129.67" fill="#f7f7f7"/><rect x="445.5" y="81.4" width="258.75" height="129.67" fill="#000" filter="url(#sp)" opacity=".37"/><path d="M445.1 81.4H704.65" stroke="#6e6e6e" stroke-width=".8"/><path d="M445.50 90.05H704.25M445.50 98.69H704.25M445.50 107.34H704.25M445.50 115.98H704.25M445.50 124.62H704.25M445.50 133.27H704.25M445.50 141.92H704.25M445.50 150.56H704.25M445.50 159.20H704.25M445.50 167.85H704.25M445.50 176.50H704.25M445.50 185.14H704.25M445.50 193.78H704.25M445.50 202.43H704.25M445.50 81.40V90.05M462.75 81.40V90.05M480.00 81.40V90.05M497.25 81.40V90.05M514.50 81.40V90.05M531.75 81.40V90.05M549.00 81.40V90.05M566.25 81.40V90.05M583.50 81.40V90.05M600.75 81.40V90.05M618.00 81.40V90.05M635.25 81.40V90.05M652.50 81.40V90.05M669.75 81.40V90.05M687.00 81.40V90.05M704.25 81.40V90.05M445.50 90.05V98.69M704.25 90.05V98.69M454.12 90.05V98.69M471.38 90.05V98.69M488.62 90.05V98.69M505.88 90.05V98.69M523.12 90.05V98.69M540.38 90.05V98.69M557.62 90.05V98.69M574.88 90.05V98.69M592.12 90.05V98.69M609.38 90.05V98.69M626.62 90.05V98.69M643.88 90.05V98.69M661.12 90.05V98.69M678.38 90.05V98.69M695.62 90.05V98.69M445.50 98.69V107.33M462.75 98.69V107.33M480.00 98.69V107.33M497.25 98.69V107.33M514.50 98.69V107.33M531.75 98.69V107.33M549.00 98.69V107.33M566.25 98.69V107.33M583.50 98.69V107.33M600.75 98.69V107.33M618.00 98.69V107.33M635.25 98.69V107.33M652.50 98.69V107.33M669.75 98.69V107.33M687.00 98.69V107.33M704.25 98.69V107.33M445.50 107.34V115.98M704.25 107.34V115.98M454.12 107.34V115.98M471.38 107.34V115.98M488.62 107.34V115.98M505.88 107.34V115.98M523.12 107.34V115.98M540.38 107.34V115.98M557.62 107.34V115.98M574.88 107.34V115.98M592.12 107.34V115.98M609.38 107.34V115.98M626.62 107.34V115.98M643.88 107.34V115.98M661.12 107.34V115.98M678.38 107.34V115.98M695.62 107.34V115.98M445.50 115.98V124.62M462.75 115.98V124.62M480.00 115.98V124.62M497.25 115.98V124.62M514.50 115.98V124.62M531.75 115.98V124.62M549.00 115.98V124.62M566.25 115.98V124.62M583.50 115.98V124.62M600.75 115.98V124.62M618.00 115.98V124.62M635.25 115.98V124.62M652.50 115.98V124.62M669.75 115.98V124.62M687.00 115.98V124.62M704.25 115.98V124.62M445.50 124.62V133.27M704.25 124.62V133.27M454.12 124.62V133.27M471.38 124.62V133.27M488.62 124.62V133.27M505.88 124.62V133.27M523.12 124.62V133.27M540.38 124.62V133.27M557.62 124.62V133.27M574.88 124.62V133.27M592.12 124.62V133.27M609.38 124.62V133.27M626.62 124.62V133.27M643.88 124.62V133.27M661.12 124.62V133.27M678.38 124.62V133.27M695.62 124.62V133.27M445.50 133.27V141.92M462.75 133.27V141.92M480.00 133.27V141.92M497.25 133.27V141.92M514.50 133.27V141.92M531.75 133.27V141.92M549.00 133.27V141.92M566.25 133.27V141.92M583.50 133.27V141.92M600.75 133.27V141.92M618.00 133.27V141.92M635.25 133.27V141.92M652.50 133.27V141.92M669.75 133.27V141.92M687.00 133.27V141.92M704.25 133.27V141.92M445.50 141.92V150.56M704.25 141.92V150.56M454.12 141.92V150.56M471.38 141.92V150.56M488.62 141.92V150.56M505.88 141.92V150.56M523.12 141.92V150.56M540.38 141.92V150.56M557.62 141.92V150.56M574.88 141.92V150.56M592.12 141.92V150.56M609.38 141.92V150.56M626.62 141.92V150.56M643.88 141.92V150.56M661.12 141.92V150.56M678.38 141.92V150.56M695.62 141.92V150.56M445.50 150.56V159.21M462.75 150.56V159.21M480.00 150.56V159.21M497.25 150.56V159.21M514.50 150.56V159.21M531.75 150.56V159.21M549.00 150.56V159.21M566.25 150.56V159.21M583.50 150.56V159.21M600.75 150.56V159.21M618.00 150.56V159.21M635.25 150.56V159.21M652.50 150.56V159.21M669.75 150.56V159.21M687.00 150.56V159.21M704.25 150.56V159.21M445.50 159.20V167.85M704.25 159.20V167.85M454.12 159.20V167.85M471.38 159.20V167.85M488.62 159.20V167.85M505.88 159.20V167.85M523.12 159.20V167.85M540.38 159.20V167.85M557.62 159.20V167.85M574.88 159.20V167.85M592.12 159.20V167.85M609.38 159.20V167.85M626.62 159.20V167.85M643.88 159.20V167.85M661.12 159.20V167.85M678.38 159.20V167.85M695.62 159.20V167.85M445.50 167.85V176.50M462.75 167.85V176.50M480.00 167.85V176.50M497.25 167.85V176.50M514.50 167.85V176.50M531.75 167.85V176.50M549.00 167.85V176.50M566.25 167.85V176.50M583.50 167.85V176.50M600.75 167.85V176.50M618.00 167.85V176.50M635.25 167.85V176.50M652.50 167.85V176.50M669.75 167.85V176.50M687.00 167.85V176.50M704.25 167.85V176.50M445.50 176.50V185.14M704.25 176.50V185.14M454.12 176.50V185.14M471.38 176.50V185.14M488.62 176.50V185.14M505.88 176.50V185.14M523.12 176.50V185.14M540.38 176.50V185.14M557.62 176.50V185.14M574.88 176.50V185.14M592.12 176.50V185.14M609.38 176.50V185.14M626.62 176.50V185.14M643.88 176.50V185.14M661.12 176.50V185.14M678.38 176.50V185.14M695.62 176.50V185.14M445.50 185.14V193.78M462.75 185.14V193.78M480.00 185.14V193.78M497.25 185.14V193.78M514.50 185.14V193.78M531.75 185.14V193.78M549.00 185.14V193.78M566.25 185.14V193.78M583.50 185.14V193.78M600.75 185.14V193.78M618.00 185.14V193.78M635.25 185.14V193.78M652.50 185.14V193.78M669.75 185.14V193.78M687.00 185.14V193.78M704.25 185.14V193.78M445.50 193.78V202.43M704.25 193.78V202.43M454.12 193.78V202.43M471.38 193.78V202.43M488.62 193.78V202.43M505.88 193.78V202.43M523.12 193.78V202.43M540.38 193.78V202.43M557.62 193.78V202.43M574.88 193.78V202.43M592.12 193.78V202.43M609.38 193.78V202.43M626.62 193.78V202.43M643.88 193.78V202.43M661.12 193.78V202.43M678.38 193.78V202.43M695.62 193.78V202.43M445.50 202.43V211.08M462.75 202.43V211.08M480.00 202.43V211.08M497.25 202.43V211.08M514.50 202.43V211.08M531.75 202.43V211.08M549.00 202.43V211.08M566.25 202.43V211.08M583.50 202.43V211.08M600.75 202.43V211.08M618.00 202.43V211.08M635.25 202.43V211.08M652.50 202.43V211.08M669.75 202.43V211.08M687.00 202.43V211.08M704.25 202.43V211.08" stroke="#000" stroke-width=".95" fill="none"/><path d="M445.0 211.07H704.75" stroke="#000" stroke-width="1.4"/><path d="M446.50 211.77l2.8 1.7M451.90 211.77l2.8 1.7M457.30 211.77l2.8 1.7M462.70 211.77l2.8 1.7M468.10 211.77l2.8 1.7M473.50 211.77l2.8 1.7M478.90 211.77l2.8 1.7M484.30 211.77l2.8 1.7M489.70 211.77l2.8 1.7M495.10 211.77l2.8 1.7M500.50 211.77l2.8 1.7M505.90 211.77l2.8 1.7M511.30 211.77l2.8 1.7M516.70 211.77l2.8 1.7M522.10 211.77l2.8 1.7M527.50 211.77l2.8 1.7M532.90 211.77l2.8 1.7M538.30 211.77l2.8 1.7M543.70 211.77l2.8 1.7M549.10 211.77l2.8 1.7M554.50 211.77l2.8 1.7M559.90 211.77l2.8 1.7M565.30 211.77l2.8 1.7M570.70 211.77l2.8 1.7M576.10 211.77l2.8 1.7M581.50 211.77l2.8 1.7M586.90 211.77l2.8 1.7M592.30 211.77l2.8 1.7M597.70 211.77l2.8 1.7M603.10 211.77l2.8 1.7M608.50 211.77l2.8 1.7M613.90 211.77l2.8 1.7M619.30 211.77l2.8 1.7M624.70 211.77l2.8 1.7M630.10 211.77l2.8 1.7M635.50 211.77l2.8 1.7M640.90 211.77l2.8 1.7M646.30 211.77l2.8 1.7M651.70 211.77l2.8 1.7M657.10 211.77l2.8 1.7M662.50 211.77l2.8 1.7M667.90 211.77l2.8 1.7M673.30 211.77l2.8 1.7M678.70 211.77l2.8 1.7M684.10 211.77l2.8 1.7M689.50 211.77l2.8 1.7M694.90 211.77l2.8 1.7M700.30 211.77l2.8 1.7" stroke="#444" stroke-width=".7" fill="none"/><path d="M709 81.4H720.5M709 211.075H720.5M714.6 81.4V211.075" stroke="#111" stroke-width=".7" fill="none"/><path d="M714.6 81.4l-1.6 3.6h3.2zM714.6 211.075l-1.6 -3.6h3.2z" fill="#111"/><rect x="709.6" y="119" width="10" height="55" fill="#fff"/><text transform="translate(710.9 146.6) rotate(90)" text-anchor="middle" fill="#2a2a2a">ht = 3000 mm</text><path d="M445.5 221V232M704.25 221V232M445.5 226.5H704.25" stroke="#1a1a1a" stroke-width=".85" fill="none"/><path d="M445.5 226.5l3.5 -1.5v3zM704.25 226.5l-3.5 -1.5v3z" fill="#111"/><rect x="545" y="221.5" width="60" height="10" fill="#fff"/><text x="575" y="229.5" text-anchor="middle" fill="#2a2a2a">bw = 6000 mm</text><rect x="445.5" y="265.5" width="258.75" height="12.80" fill="#d6d6d6" stroke="#1a1a1a" stroke-width=".9"/><path d="M462.75 265.5V278.3M480.00 265.5V278.3M497.25 265.5V278.3M514.50 265.5V278.3M531.75 265.5V278.3M549.00 265.5V278.3M566.25 265.5V278.3M583.50 265.5V278.3M600.75 265.5V278.3M618.00 265.5V278.3M635.25 265.5V278.3M652.50 265.5V278.3M669.75 265.5V278.3M687.00 265.5V278.3" stroke="#222" stroke-width=".8"/><g fill="#fff" stroke="#1a1a1a" stroke-width=".85"><rect x="448.40" y="267.40" width="5.1" height="9.00"/><rect x="454.70" y="267.40" width="5.1" height="9.00"/><rect x="465.65" y="267.40" width="5.1" height="9.00"/><rect x="471.95" y="267.40" width="5.1" height="9.00"/><rect x="482.90" y="267.40" width="5.1" height="9.00"/><rect x="489.20" y="267.40" width="5.1" height="9.00"/><rect x="500.15" y="267.40" width="5.1" height="9.00"/><rect x="506.45" y="267.40" width="5.1" height="9.00"/><rect x="517.40" y="267.40" width="5.1" height="9.00"/><rect x="523.70" y="267.40" width="5.1" height="9.00"/><rect x="534.65" y="267.40" width="5.1" height="9.00"/><rect x="540.95" y="267.40" width="5.1" height="9.00"/><rect x="551.90" y="267.40" width="5.1" height="9.00"/><rect x="558.20" y="267.40" width="5.1" height="9.00"/><rect x="569.15" y="267.40" width="5.1" height="9.00"/><rect x="575.45" y="267.40" width="5.1" height="9.00"/><rect x="586.40" y="267.40" width="5.1" height="9.00"/><rect x="592.70" y="267.40" width="5.1" height="9.00"/><rect x="603.65" y="267.40" width="5.1" height="9.00"/><rect x="609.95" y="267.40" width="5.1" height="9.00"/><rect x="620.90" y="267.40" width="5.1" height="9.00"/><rect x="627.20" y="267.40" width="5.1" height="9.00"/><rect x="638.15" y="267.40" width="5.1" height="9.00"/><rect x="644.45" y="267.40" width="5.1" height="9.00"/><rect x="655.40" y="267.40" width="5.1" height="9.00"/><rect x="661.70" y="267.40" width="5.1" height="9.00"/><rect x="672.65" y="267.40" width="5.1" height="9.00"/><rect x="678.95" y="267.40" width="5.1" height="9.00"/><rect x="689.90" y="267.40" width="5.1" height="9.00"/><rect x="696.20" y="267.40" width="5.1" height="9.00"/></g><path d="M430 265.5H441M430 278.3H441M435.5 265.5V278.3" stroke="#111" stroke-width=".7" fill="none"/><path d="M435.5 265.5l-1.5 3h3zM435.5 278.3l-1.5 -3h3z" fill="#111"/><text transform="translate(424.3 271.5) rotate(-90)" text-anchor="middle" fill="#2a2a2a">bw = 290 mm</text></svg>
</body></html>
